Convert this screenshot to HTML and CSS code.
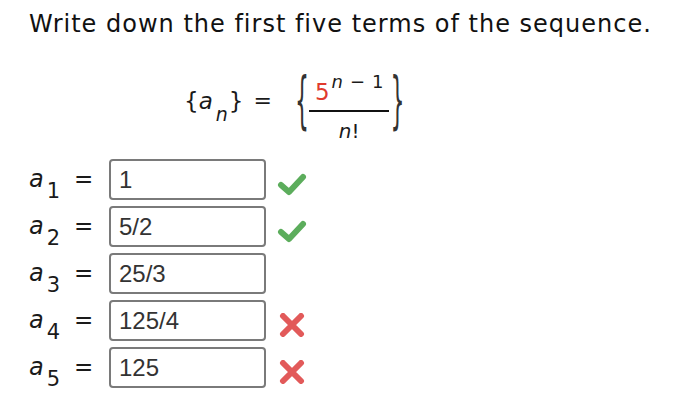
FILE: index.html
```html
<!DOCTYPE html>
<html>
<head>
<meta charset="utf-8">
<link rel="stylesheet" href="styles.css">
</head>
<body>
<div class="page">
  <h1 class="title">Write down the first five terms of the sequence.</h1>
  <div class="formula">
    <span class="lhs">{<i>a</i><span class="sub"><i>n</i></span>}</span>
    <span class="eq">=</span>
    <span class="brace">{</span>
    <span class="frac">
      <span class="num"><span class="red">5</span><span class="sup"><i>n</i><span class="minus">−</span>1</span></span>
      <span class="den"><i>n</i>!</span>
    </span>
    <span class="brace">}</span>
  </div>
  <div class="rows">
    <div class="row">
      <span class="label"><i>a</i><span class="lsub">1</span></span><span class="leq">=</span>
      <div class="box">1</div>
      <svg class="icon" viewBox="0 0 30 24"><path d="M4 13 L12 20 L26 5" fill="none" stroke="#5cad5c" stroke-width="6" stroke-linecap="round" stroke-linejoin="round"/></svg>
    </div>
    <div class="row">
      <span class="label"><i>a</i><span class="lsub">2</span></span><span class="leq">=</span>
      <div class="box">5/2</div>
      <svg class="icon" viewBox="0 0 30 24"><path d="M4 13 L12 20 L26 5" fill="none" stroke="#5cad5c" stroke-width="6" stroke-linecap="round" stroke-linejoin="round"/></svg>
    </div>
    <div class="row">
      <span class="label"><i>a</i><span class="lsub">3</span></span><span class="leq">=</span>
      <div class="box">25/3</div>
    </div>
    <div class="row">
      <span class="label"><i>a</i><span class="lsub">4</span></span><span class="leq">=</span>
      <div class="box">125/4</div>
      <svg class="icon" viewBox="0 0 30 24"><path d="M6 3 L24 21 M24 3 L6 21" fill="none" stroke="#e25a5a" stroke-width="6" stroke-linecap="round"/></svg>
    </div>
    <div class="row">
      <span class="label"><i>a</i><span class="lsub">5</span></span><span class="leq">=</span>
      <div class="box">125</div>
      <svg class="icon" viewBox="0 0 30 24"><path d="M6 3 L24 21 M24 3 L6 21" fill="none" stroke="#e25a5a" stroke-width="6" stroke-linecap="round"/></svg>
    </div>
  </div>
</div>
</body>
</html>
```
FILE: styles.css
```css
html, body { margin: 0; padding: 0; background: #fff; }
body { font-family: "DejaVu Sans", Verdana, sans-serif; color: #111; }
.title {
  margin: 0;
  padding: 10px 0 0 29px;
  font-size: 24px;
  font-weight: normal;
  line-height: 28px;
  letter-spacing: 1px;
  color: #111;
  height: 28px;
}
.formula {
  display: flex;
  align-items: flex-start;
  margin: 39px 0 0 184px;
  height: 68px;
  color: #1a1a1a;
}
.lhs {
  display: inline-block;
  font-size: 23px;
  line-height: 24px;
  margin-top: 12px;
  white-space: nowrap;
}
.sub { font-size: 19px; position: relative; top: 12px; margin-left: 3px; margin-right: 1px; }
.eq {
  font-size: 22px;
  line-height: 24px;
  margin: 12px 23px 0 10px;
}
.brace {
  display: inline-block;
  font-size: 22px;
  line-height: 24px;
  margin-top: 12px;
  color: #333;
  transform: scaleY(2.8);
}
.frac {
  display: inline-flex;
  flex-direction: column;
  align-items: stretch;
  margin: 0 1px 0 0;
}
.num {
  display: block;
  padding: 0 6px 3px 6px;
  border-bottom: 2px solid #111;
  line-height: 30px;
  height: 30px;
  font-size: 23px;
  white-space: nowrap;
}
.red { color: #e03a2e; }
.sup { font-size: 18px; line-height: 0; vertical-align: 12px; margin-left: 2px; }
.minus { margin: 0 7px; }
.den {
  display: block;
  text-align: center;
  padding-top: 6px;
  line-height: 26px;
  font-size: 20px;
}
.rows {
  display: flex;
  flex-direction: column;
  gap: 6px;
  margin-top: 14px;
}
.row {
  display: flex;
  align-items: center;
  height: 41px;
}
.label {
  display: inline-block;
  box-sizing: border-box;
  width: 74px;
  padding-left: 29px;
  font-size: 24px;
  line-height: 41px;
  color: #1a1a1a;
  white-space: nowrap;
  align-self: flex-start;
}
.lsub { font-size: 21px; position: relative; top: 11px; margin-left: 3px; }
.leq { font-size: 23px; width: 35px; line-height: 41px; align-self: flex-start; color: #1a1a1a; }
.box {
  box-sizing: border-box;
  width: 157px;
  height: 41px;
  border: 2px solid #7a7a7a;
  border-radius: 4px;
  font-family: "Liberation Sans", Arial, sans-serif;
  font-size: 24px;
  color: #333;
  padding: 0 0 0 8px;
  display: flex;
  align-items: center;
}
.icon { width: 30px; height: 24px; margin: 8px 0 0 11px; }
```
